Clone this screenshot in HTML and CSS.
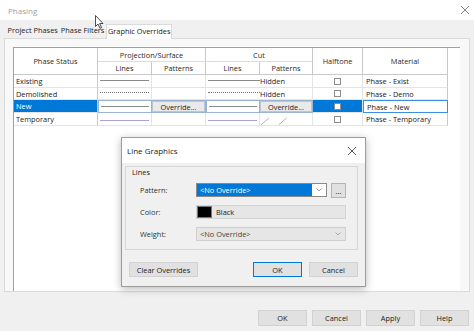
FILE: index.html
```html
<!DOCTYPE html>
<html lang="en">
<head>
    <meta charset="UTF-8">
    <title>Phasing</title>
    <link rel="stylesheet" href="styles.css">
</head>
<body>
    <div class="window">
        <div class="titlebar">
            <span class="title">Phasing</span>
            <svg class="close" width="10" height="10" viewBox="0 0 10 10"><path d="M1 1L9 9M9 1L1 9" stroke="#777" stroke-width="0.9"/></svg>
        </div>
        <div class="tabs">
            <span class="tab">Project Phases</span>
            <span class="tab">Phase Filters</span>
            <span class="tab active">Graphic Overrides</span>
        </div>
        <div class="panel">
            <div class="grid-box">
                <div class="grid">
                    <div class="hd status">Phase Status</div>
                    <div class="hd proj">Projection/Surface</div>
                    <div class="hd cut">Cut</div>
                    <div class="hd halftone">Halftone</div>
                    <div class="hd material">Material</div>
                    <div class="hd sub">Lines</div>
                    <div class="hd sub">Patterns</div>
                    <div class="hd sub">Lines</div>
                    <div class="hd sub">Patterns</div>

                    <!-- Existing -->
                    <div class="c name">Existing</div>
                    <div class="c line"><span class="ln"></span></div>
                    <div class="c"></div>
                    <div class="c line cutline"><span class="ln"></span></div>
                    <div class="c pat">Hidden</div>
                    <div class="c check"><span class="box"></span></div>
                    <div class="c mat">Phase - Exist</div>

                    <!-- Demolished -->
                    <div class="c name">Demolished</div>
                    <div class="c line"><span class="ln dot"></span></div>
                    <div class="c"></div>
                    <div class="c line cutline"><span class="ln dot"></span></div>
                    <div class="c pat">Hidden</div>
                    <div class="c check"><span class="box"></span></div>
                    <div class="c mat">Phase - Demo</div>

                    <!-- New (selected) -->
                    <div class="c name sel">New</div>
                    <div class="c line edit"><span class="ln"></span></div>
                    <div class="c edit"><span class="override">Override...</span></div>
                    <div class="c line edit"><span class="ln"></span></div>
                    <div class="c edit"><span class="override">Override...</span></div>
                    <div class="c check sel"><span class="box"></span></div>
                    <div class="c mat focus">Phase - New</div>

                    <!-- Temporary -->
                    <div class="c name">Temporary</div>
                    <div class="c line"><span class="ln temp"></span></div>
                    <div class="c"></div>
                    <div class="c line"><span class="ln temp"></span></div>
                    <div class="c hatch">
                        <svg width="53" height="12" viewBox="0 0 53 12"><path d="M1 12L9 5M19 12L27 5" stroke="#9a9a9a" stroke-width="0.8"/></svg>
                    </div>
                    <div class="c check"><span class="box"></span></div>
                    <div class="c mat">Phase - Temporary</div>
                </div>
            </div>
        </div>
        <div class="footer">
            <button class="btn">OK</button>
            <button class="btn">Cancel</button>
            <button class="btn">Apply</button>
            <button class="btn">Help</button>
        </div>

        <svg class="cursor" width="10" height="14" viewBox="0 0 10 14"><path d="M0.5 0.5V11.5L3 9L5 13.3L6.6 12.6L4.7 8.5H8Z" fill="#fff" stroke="#222" stroke-width="0.8"/></svg>

        <div class="dialog">
            <div class="dlg-title">
                <span>Line Graphics</span>
                <svg width="10" height="10" viewBox="0 0 10 10"><path d="M1 1L9 9M9 1L1 9" stroke="#444" stroke-width="0.9"/></svg>
            </div>
            <div class="dlg-body">
                <div class="group">
                    <div class="legend">Lines</div>
                    <div class="form-row">
                        <label>Pattern:</label>
                        <div class="pattern-field">
                            <div class="combo active">
                                <span class="value">&lt;No Override&gt;</span>
                                <span class="arrow"><svg width="6" height="4" viewBox="0 0 6 4"><path d="M0.5 0.5L3 3L5.5 0.5" stroke="#888" fill="none" stroke-width="0.8"/></svg></span>
                            </div>
                            <button class="dots">...</button>
                        </div>
                    </div>
                    <div class="form-row">
                        <label>Color:</label>
                        <div class="color-field">
                            <span class="swatch"></span>
                            <span>Black</span>
                        </div>
                    </div>
                    <div class="form-row">
                        <label>Weight:</label>
                        <div class="combo">
                            <span class="value">&lt;No Override&gt;</span>
                            <span class="arrow"><svg width="6" height="4" viewBox="0 0 6 4"><path d="M0.5 0.5L3 3L5.5 0.5" stroke="#999" fill="none" stroke-width="0.8"/></svg></span>
                        </div>
                    </div>
                </div>
                <div class="dlg-buttons">
                    <button class="btn wide">Clear Overrides</button>
                    <span class="spacer"></span>
                    <button class="btn default">OK</button>
                    <button class="btn">Cancel</button>
                </div>
            </div>
        </div>
    </div>
</body>
</html>
```

FILE: styles.css
```css
* {
    box-sizing: border-box;
}
body {
    margin: 0;
    font-family: "Open Sans", "Noto Sans", sans-serif;
    font-size: 7.4px;
    color: #1a1a1a;
    background: #f0f0f0;
}
.window {
    position: relative;
    width: 474px;
    height: 331px;
    overflow: hidden;
    background: #f0f0f0;
}
.titlebar {
    height: 20px;
    background: #fff;
    display: flex;
    align-items: center;
    justify-content: space-between;
    padding: 0 4px 0 8px;
}
.title {
    color: #a0a0a0;
    font-size: 8px;
}
.tabs {
    display: flex;
    align-items: flex-end;
    height: 18px;
    padding-left: 6px;
}
.tab {
    height: 14px;
    line-height: 13px;
    padding: 0 1.5px;
}
.tab.active {
    background: #fff;
    border: 1px solid #dadada;
    border-bottom: none;
    padding: 0 1px;
    position: relative;
    z-index: 1;
    margin-bottom: -1px;
    height: 15px;
}
.panel {
    margin: 0 4px;
    height: 254px;
    border: 1px solid #dadada;
    background: #f8f8f8;
    padding: 8px 9px 0 8px;
}
.grid-box {
    height: 100%;
    background: #fff;
    border-left: 1px solid #a0a0a0;
    border-top: 1px solid #a0a0a0;
}
.grid {
    display: grid;
    grid-template-columns: 84px 54px 54px 54px 53px 50px 85px;
    grid-template-rows: 14px 13px 13px 12px 13px 13px;
}
.hd {
    display: flex;
    align-items: center;
    justify-content: center;
    border-right: 1px solid #c8c8c8;
    border-bottom: 1px solid #c8c8c8;
    color: #2a2a2a;
}
.hd.status, .hd.halftone, .hd.material {
    grid-row: span 2;
}
.hd.proj, .hd.cut {
    grid-column: span 2;
    border-bottom-color: #dcdcdc;
}
.c {
    display: flex;
    align-items: center;
    border-right: 1px solid #e4e4e4;
    border-bottom: 1px solid #e4e4e4;
    overflow: hidden;
    white-space: nowrap;
}
.c.name {
    padding-left: 2px;
    border-right-color: #c8c8c8;
}
.c.mat {
    padding-left: 3px;
    border-right-color: #c8c8c8;
}
.c.line {
    padding: 0 2px;
}
.c.cutline {
    padding-right: 0;
    border-right: none;
}
.ln {
    flex: 1;
    border-top: 1px solid #8a8a8a;
    margin-bottom: 2px;
}
.ln.dot {
    border-top: 1px dotted #777;
}
.ln.temp {
    border-top-color: #a9a2d8;
    margin: 3px 0 0;
}
.c.pat {
    padding-left: 0;
}
.c.hatch {
    align-items: stretch;
}
.c.check {
    justify-content: center;
}
.box {
    width: 7px;
    height: 7px;
    border: 1px solid #8c8c8c;
    background: #fff;
}
.sel {
    background: #0078d7;
    color: #fff;
}
.c.edit {
    border: 1px solid #9ab4d4;
    border-left: none;
}
.c.edit.line {
    border-left: 1px solid #9ab4d4;
}
.c.edit .ln {
    margin-bottom: 0;
}
.override {
    flex: 1;
    align-self: stretch;
    display: flex;
    align-items: center;
    justify-content: center;
    background: #e9e9e9;
    border: 1px solid #b7c6d8;
    color: #222;
}
.c.focus {
    border: 1px solid #3d8ee0;
}
.footer {
    display: flex;
    justify-content: flex-end;
    gap: 5px;
    padding: 18px 5px 0 0;
}
.btn {
    font: inherit;
    color: #222;
    width: 49px;
    height: 16px;
    padding: 0;
    background: #e1e1e1;
    border: 1px solid #d2d2d2;
}
.cursor {
    position: absolute;
    left: 95px;
    top: 15px;
}
.dialog {
    position: absolute;
    left: 121px;
    top: 137px;
    width: 245px;
    background: #f0f0f0;
    border: 1px solid #9c9c9c;
    box-shadow: 0 2px 8px rgba(0, 0, 0, 0.28);
}
.dlg-title {
    height: 25px;
    background: #fff;
    display: flex;
    align-items: center;
    justify-content: space-between;
    padding: 0 8px 0 5px;
    font-size: 8px;
}
.dlg-body {
    padding: 3px 7px 9px 3px;
}
.group {
    border: 1px solid #d6d6d6;
    padding: 0 11px 8px 6px;
}
.legend {
    line-height: 11px;
}
.form-row {
    display: grid;
    grid-template-columns: 56px 1fr;
    align-items: center;
    height: 14px;
    margin-top: 8px;
    padding-left: 8px;
}
.form-row:nth-child(2) {
    margin-top: 5px;
}
.form-row label {
    color: #333;
}
.pattern-field {
    display: flex;
    gap: 4px;
    height: 14px;
}
.combo {
    flex: 1;
    display: flex;
    height: 14px;
    background: #e6e6e6;
    border: 1px solid #cfcfcf;
    color: #444;
}
.combo .value {
    flex: 1;
    padding-left: 3px;
    display: flex;
    align-items: center;
}
.combo .arrow {
    width: 14px;
    display: flex;
    align-items: center;
    justify-content: center;
}
.combo.active {
    border-color: #8a8a8a;
    background: #fff;
}
.combo.active .value {
    background: #0078d7;
    color: #fff;
}
.dots {
    font: inherit;
    width: 15px;
    height: 15px;
    padding: 0;
    background: #e1e1e1;
    border: 1px solid #b4b4b4;
    line-height: 10px;
}
.color-field {
    display: flex;
    align-items: center;
    gap: 4px;
    height: 14px;
    background: #e6e6e6;
    border: 1px solid #d4d4d4;
}
.swatch {
    width: 15px;
    height: 12px;
    background: #000;
    border: 1px solid #777;
}
.dlg-buttons {
    display: flex;
    gap: 7px;
    margin-top: 12px;
    padding-left: 4px;
}
.dlg-buttons .btn {
    height: 15px;
}
.btn.wide {
    width: 69px;
}
.spacer {
    flex: 1;
}
.btn.default {
    border-color: #0078d7;
}
```
